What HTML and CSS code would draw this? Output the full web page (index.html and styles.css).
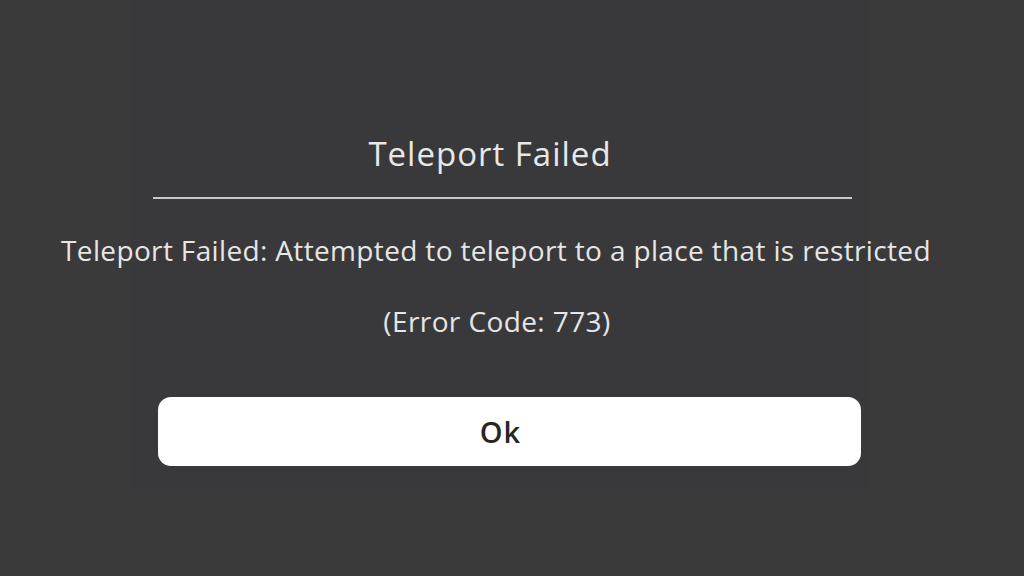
FILE: index.html
```html
<!DOCTYPE html>
<html lang="en">
<head>
<meta charset="utf-8">
<title>Teleport Failed</title>
<link rel="stylesheet" href="styles.css">
</head>
<body>
<main class="screen">
  <section class="dialog">
    <h1 class="title">Teleport Failed</h1>
    <hr class="divider">
    <p class="message">Teleport Failed: Attempted to teleport to a place that is restricted</p>
    <p class="code">(Error Code: 773)</p>
    <button class="ok">Ok</button>
  </section>
</main>
</body>
</html>
```
FILE: styles.css
```css
html, body {
  margin: 0;
  padding: 0;
  background: #3a3a3a;
}
.screen {
  width: 1024px;
  height: 576px;
  overflow: hidden;
  display: flex;
  justify-content: center;
  font-family: "Open Sans", "Noto Sans", sans-serif;
  color: #e6e6e6;
}
.dialog {
  width: 740px;
  margin-right: 24px;
  padding-top: 134px;
  height: 356px;
  display: flex;
  flex-direction: column;
  align-items: center;
  background: #39393b;
}
.title {
  margin: 0 20px 0 0;
  font-size: 33px;
  line-height: 40px;
  font-weight: 400;
  letter-spacing: 1px;
  color: #e8e8e8;
  white-space: nowrap;
}
.divider {
  margin: 23px 0 0 4px;
  width: 699px;
  height: 2px;
  border: 0;
  background: #c9c9c9;
}
.message {
  margin: 33px 0 0 -8px;
  font-size: 28px;
  line-height: 36px;
  letter-spacing: 0.35px;
  white-space: nowrap;
  color: #e6e6e6;
}
.code {
  margin: 35px 0 0 -6px;
  font-size: 28px;
  line-height: 36px;
  letter-spacing: 0.4px;
  white-space: nowrap;
  color: #e6e6e6;
}
.ok {
  margin: 58px 0 0 19px;
  width: 703px;
  height: 69px;
  border: 0;
  border-radius: 13px;
  background: #ffffff;
  font-family: "Open Sans", "Noto Sans", sans-serif;
  font-size: 29px;
  font-weight: 600;
  letter-spacing: 1px;
  color: #262626;
  padding: 0 18px 0 0;
}
```
